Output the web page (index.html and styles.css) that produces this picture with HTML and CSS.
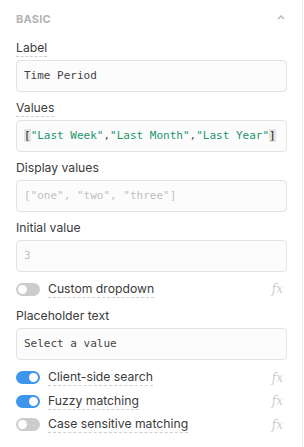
FILE: index.html
```html
<!DOCTYPE html>
<html lang="en">
<head>
    <meta charset="UTF-8">
    <meta name="viewport" content="width=device-width, initial-scale=1.0">
    <title>Inspector</title>

    <link rel="stylesheet" href="styles.css">
</head>
<body>

    <div id="inspector">

        <div class="section-head">
            <span>Basic</span>
            <svg class="chevron" width="8" height="5" viewBox="0 0 8 5">
                <path d="M1 4 L4 1 L7 4" fill="none" stroke="#b5b5b5" stroke-width="1.3"/>
            </svg>
        </div>

        <div class="field">
            <div class="label"><span class="dashed">Label</span></div>
            <div class="input">Time Period</div>
        </div>

        <div class="field">
            <div class="label"><span class="dashed">Values</span></div>
            <div class="input code"><span class="bracket">[</span><span class="str">"Last Week"</span>,<span class="str">"Last Month"</span>,<span class="str">"Last Year"</span><span class="bracket">]</span></div>
        </div>

        <div class="field">
            <div class="label">Display values</div>
            <div class="input placeholder">["one", "two", "three"]</div>
        </div>

        <div class="field">
            <div class="label">Initial value</div>
            <div class="input placeholder">3</div>
        </div>

        <div class="toggle-row single">
            <span class="toggle"></span>
            <span class="dashed">Custom dropdown</span>
            <span class="fx">fx</span>
        </div>

        <div class="field">
            <div class="label">Placeholder text</div>
            <div class="input">Select a value</div>
        </div>

        <div class="toggle-group">
            <div class="toggle-row">
                <span class="toggle on"></span>
                <span class="dashed">Client-side search</span>
                <span class="fx">fx</span>
            </div>
            <div class="toggle-row">
                <span class="toggle on"></span>
                <span class="dashed">Fuzzy matching</span>
                <span class="fx">fx</span>
            </div>
            <div class="toggle-row">
                <span class="toggle"></span>
                <span class="dashed">Case sensitive matching</span>
                <span class="fx">fx</span>
            </div>
        </div>

    </div>

</body>
</html>
```

FILE: styles.css
```css
* {
    margin: 0px;
    padding: 0px;
    box-sizing: border-box;
}
html, body {
    width: 100%;
    height: 100%;
    background-color: #ffffff;
}
body {
    font-family: Inter, "Noto Sans", sans-serif;
    color: #3a3a3a;
}
#inspector {
    width: 303px;
    height: 100%;
    padding: 12px 15px 0px 16px;
    border-right: 1px solid #ececec;
}
.section-head {
    height: 14px;
    margin-bottom: 14px;
    display: flex;
    align-items: center;
    justify-content: space-between;
    font-size: 11px;
    font-weight: 700;
    color: #b3b3b3;
    text-transform: uppercase;
    letter-spacing: 0.2px;
}
.chevron {
    margin-right: 2px;
    margin-top: -4px;
}
.field {
    margin-bottom: 8px;
}
.label {
    height: 16px;
    line-height: 16px;
    margin-bottom: 4px;
    font-size: 12.2px;
}
.dashed {
    border-bottom: 1px dashed #cfcfcf;
    padding-bottom: 1px;
}
.input {
    height: 32px;
    line-height: 30px;
    padding: 0px 7px;
    border: 1px solid #e3e3e3;
    border-radius: 4px;
    background-color: #fcfcfc;
    font-family: "DejaVu Sans Mono", monospace;
    font-size: 11px;
    color: #444444;
    white-space: nowrap;
    overflow: hidden;
}
.placeholder {
    color: #c0c0c0;
}
.code {
    color: #555555;
}
.str {
    color: #21966a;
}
.bracket {
    background-color: #e4e4e4;
    color: #222222;
}
.toggle-row {
    height: 24px;
    display: flex;
    align-items: center;
    font-size: 12.2px;
}
.toggle-row.single {
    margin-top: -3px;
    margin-bottom: 7px;
}
.toggle-group {
    margin-top: -2px;
    display: flex;
    flex-direction: column;
}
.toggle-group .toggle-row {
    height: 23.5px;
}
.toggle {
    position: relative;
    width: 24px;
    height: 13px;
    border-radius: 7px;
    background-color: #cccccc;
    margin-right: 8px;
}
.toggle::after {
    content: "";
    position: absolute;
    top: 2px;
    left: 2px;
    width: 9px;
    height: 9px;
    border-radius: 50%;
    background-color: #ffffff;
}
.toggle.on {
    background-color: #3d95ec;
}
.toggle.on::after {
    left: 13px;
}
.fx {
    margin-left: auto;
    margin-right: 4px;
    font-family: "DejaVu Serif", serif;
    font-style: italic;
    font-size: 12px;
    color: #cccccc;
}
```
